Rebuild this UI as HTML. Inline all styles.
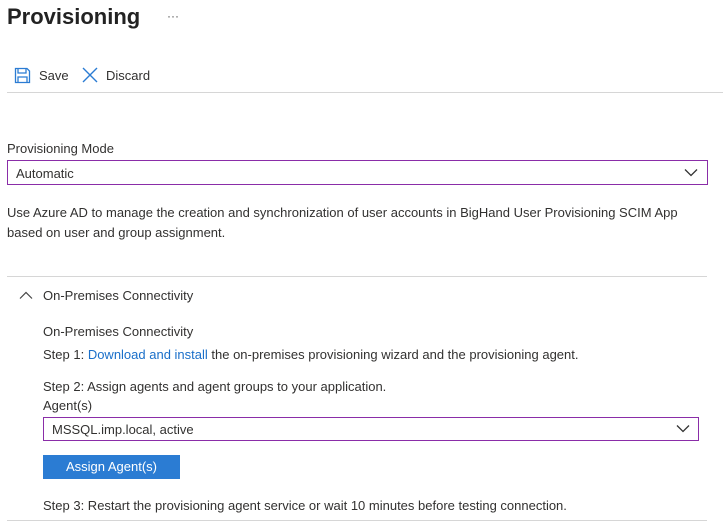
<!DOCTYPE html>
<html><head><style>
body{margin:0;width:723px;height:527px;background:#fff;font-family:"Segoe UI","Liberation Sans",sans-serif;color:#323130;position:relative;overflow:hidden;font-size:13px}
.a{position:absolute;white-space:nowrap;line-height:16px}
.line{position:absolute;height:1px;background:#d6d6d6}
.dd{position:absolute;border:1px solid #8a2da8;box-sizing:border-box}
a{color:#1a6fc9;text-decoration:none}
</style></head><body>
<div class="a" style="left:7px;top:3px;font-size:22px;line-height:28px;font-weight:bold;color:#222">Provisioning</div>
<div class="a" style="left:167px;top:8px;color:#555;font-size:12px">···</div>
<svg class="a" style="left:14px;top:67px" width="17" height="17" viewBox="0 0 17 17"><path d="M1.5 1.5h11.5l2.5 2.5v11.5h-14z" fill="none" stroke="#2b7cd3" stroke-width="1.3"/><path d="M4 1.5v4.5h8v-4.5M4 15.5v-5.5h9v5.5" fill="none" stroke="#2b7cd3" stroke-width="1.3"/></svg>
<div class="a" style="left:39px;top:68px">Save</div>
<svg class="a" style="left:82px;top:67px" width="16" height="16" viewBox="0 0 16 16"><path d="M1 1L15 15M15 1L1 15" stroke="#2b7cd3" stroke-width="1.4"/></svg>
<div class="a" style="left:106px;top:68px">Discard</div>
<div class="line" style="left:7px;top:92px;width:716px"></div>
<div class="a" style="left:7px;top:141px">Provisioning Mode</div>
<div class="dd" style="left:7px;top:160px;width:701px;height:25px"></div>
<div class="a" style="left:16px;top:166px">Automatic</div>
<svg class="a" style="left:684px;top:168px" width="14" height="9" viewBox="0 0 14 9"><path d="M1 1.5l6 6 6-6" fill="none" stroke="#333" stroke-width="1.3"/></svg>
<div class="a" style="left:7px;top:205px">Use Azure AD to manage the creation and synchronization of user accounts in BigHand User Provisioning SCIM App</div>
<div class="a" style="left:7px;top:225px">based on user and group assignment.</div>
<div class="line" style="left:7px;top:276px;width:700px"></div>
<svg class="a" style="left:19px;top:291px" width="14" height="9" viewBox="0 0 14 9"><path d="M1 7.5l6-6 6 6" fill="none" stroke="#444" stroke-width="1.2"/></svg>
<div class="a" style="left:43px;top:288px">On-Premises Connectivity</div>
<div class="a" style="left:43px;top:324px">On-Premises Connectivity</div>
<div class="a" style="left:43px;top:347px">Step 1: <a>Download and install</a> the on-premises provisioning wizard and the provisioning agent.</div>
<div class="a" style="left:43px;top:379px">Step 2: Assign agents and agent groups to your application.</div>
<div class="a" style="left:43px;top:398px">Agent(s)</div>
<div class="dd" style="left:43px;top:417px;width:656px;height:24px"></div>
<div class="a" style="left:52px;top:422px">MSSQL.imp.local, active</div>
<svg class="a" style="left:676px;top:424px" width="14" height="9" viewBox="0 0 14 9"><path d="M1 1.5l6 6 6-6" fill="none" stroke="#333" stroke-width="1.3"/></svg>
<div class="a" style="left:43px;top:455px;width:137px;height:24px;background:#2b7cd3;color:#fff;text-align:center;line-height:24px">Assign Agent(s)</div>
<div class="a" style="left:43px;top:498px">Step 3: Restart the provisioning agent service or wait 10 minutes before testing connection.</div>
<div class="line" style="left:7px;top:520px;width:700px"></div>
</body></html>
